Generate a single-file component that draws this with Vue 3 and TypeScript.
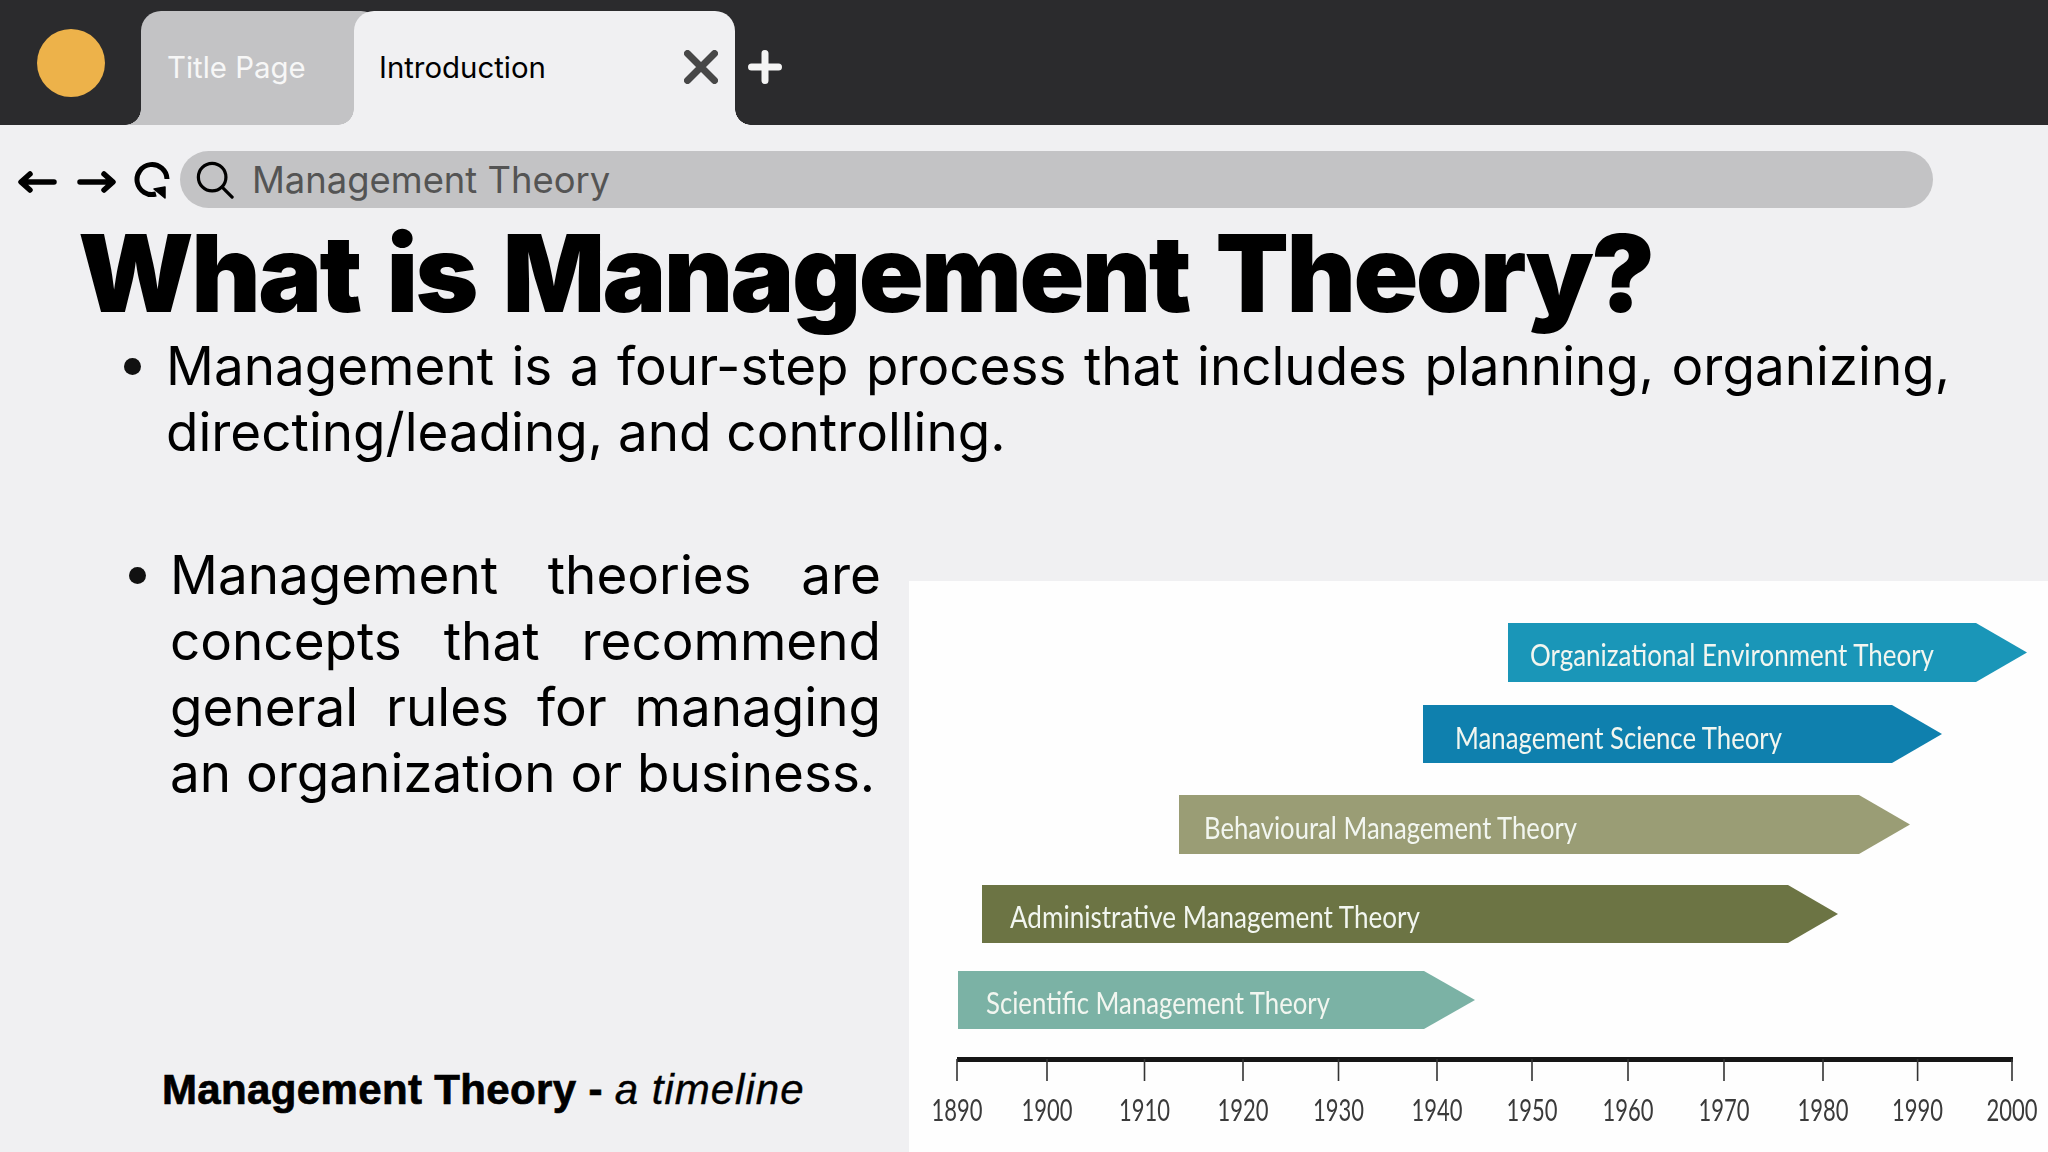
<script setup lang="ts">
interface Band { label: string; x: number; end: number; tip: number; top: number; bottom: number; textX: number; textEnd: number; textY: number; fill: string }
const bands: Band[] = [
  { label: 'Organizational Environment Theory', x: 599, end: 1067, tip: 1118, top: 42, bottom: 101, textX: 621, textEnd: 1025, textY: 85, fill: '#1a96b8' },
  { label: 'Management Science Theory', x: 514, end: 983, tip: 1033, top: 124, bottom: 182, textX: 546, textEnd: 873, textY: 168, fill: '#0f80ae' },
  { label: 'Behavioural Management Theory', x: 270, end: 950, tip: 1001, top: 214, bottom: 273, textX: 295, textEnd: 668, textY: 258, fill: '#9a9d75' },
  { label: 'Administrative Management Theory', x: 73, end: 879, tip: 929, top: 304, bottom: 362, textX: 101, textEnd: 511, textY: 347, fill: '#6c7444' },
  { label: 'Scientific Management Theory', x: 49, end: 515, tip: 566, top: 390, bottom: 448, textX: 77, textEnd: 421, textY: 433, fill: '#7bb2a5' },
]
const ticks = [48, 138, 235.5, 334, 429.5, 528, 623, 719, 815, 914, 1008.6, 1103]
const years = [1890, 1900, 1910, 1920, 1930, 1940, 1950, 1960, 1970, 1980, 1990, 2000]
</script>

<template>
  <div class="page">
    <header class="tabbar">
      <span class="logo"></span>
      <div class="tab inactive"><span>Title Page</span></div>
      <div class="tab active">
        <span>Introduction</span>
        <svg class="close" viewBox="0 0 34 34" aria-hidden="true"><path d="M3.5 3.5 30.5 30.5M30.5 3.5 3.5 30.5" /></svg>
      </div>
      <svg class="plus" viewBox="0 0 34 34" aria-hidden="true"><path d="M17 3.5V30.5M3.5 17H30.5" /></svg>
    </header>

    <nav class="toolbar">
      <svg class="arrow" viewBox="0 0 40 24" aria-hidden="true"><path d="M37 12H5M13 4 4 12l9 8" /></svg>
      <svg class="arrow next" viewBox="0 0 40 24" aria-hidden="true"><path d="M3 12H35M27 4l9 8-9 8" /></svg>
      <svg class="reload" viewBox="0 0 36 38" aria-hidden="true">
        <path class="ring" d="M33 17A15 15 0 1 0 22 32" />
        <path class="head" d="M20 27 31 25V36Z" />
      </svg>
      <div class="address">
        <svg class="search" viewBox="0 0 40 40" aria-hidden="true"><circle cx="17" cy="17" r="14.5" /><path d="M27.5 27.5 38 38" /></svg>
        <span>Management Theory</span>
      </div>
    </nav>

    <h1>What is Management Theory?</h1>
    <ul class="first">
      <li>Management is a four-step process that includes planning, organizing, directing/leading, and controlling.</li>
    </ul>

    <section class="lower">
      <div class="left">
        <ul class="second">
          <li>Management theories are concepts that recommend general rules for managing an organization or business.</li>
        </ul>
        <p class="caption"><b>Management Theory - </b><i>a timeline</i></p>
      </div>
      <figure class="chart">
        <svg viewBox="0 0 1139 571" width="1139" height="571">
          <g v-for="b in bands" :key="b.label">
            <polygon :points="`${b.x},${b.top} ${b.end},${b.top} ${b.tip},${(b.top + b.bottom) / 2} ${b.end},${b.bottom} ${b.x},${b.bottom}`" :fill="b.fill" />
            <text class="band-label" :x="b.textX" :y="b.textY" :textLength="b.textEnd - b.textX" lengthAdjust="spacingAndGlyphs">{{ b.label }}</text>
          </g>
          <rect x="48" y="476" width="1056" height="5" fill="#161616" />
          <g v-for="(t, i) in ticks" :key="t">
            <line :x1="t" :x2="t" y1="478" y2="500" stroke="#333" stroke-width="1.6" />
            <text class="year" :x="t" y="540" text-anchor="middle" textLength="51" lengthAdjust="spacingAndGlyphs">{{ years[i] }}</text>
          </g>
        </svg>
      </figure>
    </section>
  </div>
</template>

<style>
html, body { margin: 0; background: #f0f0f2; }
</style>

<style scoped>
.page {
  width: 2048px;
  height: 1152px;
  overflow: hidden;
  display: flex;
  flex-direction: column;
  background: #f0f0f2;
  color: #000;
  font-family: Inter, "Liberation Sans", sans-serif;
}
.tabbar {
  flex: none;
  height: 125px;
  box-sizing: border-box;
  padding: 11px 0 0 37px;
  display: flex;
  align-items: flex-start;
  background: #2b2b2d;
}
.logo {
  flex: none;
  width: 68px;
  height: 68px;
  margin: 18px 36px 0 0;
  border-radius: 50%;
  background: #edb24a;
}
.tab {
  position: relative;
  flex: none;
  box-sizing: border-box;
  height: 114px;
  display: flex;
  align-items: flex-start;
  font-size: 29.4px;
  line-height: 36px;
  padding-top: 39px;
  border-radius: 20px 20px 0 0;
}
.tab::before,
.tab.active::after {
  content: "";
  position: absolute;
  bottom: 0;
  width: 16px;
  height: 16px;
}
.tab.inactive {
  width: 240px;
  margin-right: -27px;
  padding-left: 26px;
  background: #c3c3c5;
  color: #f7f7f7;
}
.tab.inactive::before {
  left: -16px;
  background: radial-gradient(circle at 0 0, transparent 15.5px, #c3c3c5 16px);
}
.tab.active {
  width: 381px;
  padding-left: 25px;
  background: #f0f0f2;
  color: #000;
}
.tab.active::before {
  left: -16px;
  background: radial-gradient(circle at 0 0, transparent 15.5px, #f0f0f2 16px);
}
.tab.active::after {
  right: -16px;
  background: radial-gradient(circle at 100% 0, transparent 15.5px, #f0f0f2 16px);
}
.close {
  position: absolute;
  left: 330px;
  top: 39px;
  width: 34px;
  height: 34px;
  fill: none;
  stroke: #474747;
  stroke-width: 7;
  stroke-linecap: round;
}
.plus {
  flex: none;
  width: 34px;
  height: 34px;
  margin: 39px 0 0 13px;
  fill: none;
  stroke: #f4f4f4;
  stroke-width: 7;
  stroke-linecap: round;
}
.toolbar {
  flex: none;
  height: 57px;
  margin-top: 26px;
  padding-left: 17px;
  display: flex;
  align-items: center;
}
.arrow {
  flex: none;
  width: 40px;
  height: 24px;
  margin-top: 5px;
  fill: none;
  stroke: #000;
  stroke-width: 5.5;
  stroke-linecap: round;
  stroke-linejoin: round;
}
.arrow.next { margin-left: 20px; }
.reload {
  flex: none;
  width: 36px;
  height: 38px;
  margin: 3px 0 0 17px;
  fill: none;
}
.ring { stroke: #000; stroke-width: 5; }
.head { fill: #000; stroke: #000; stroke-width: 1.5; stroke-linejoin: round; }
.address {
  flex: none;
  box-sizing: border-box;
  width: 1753px;
  height: 57px;
  margin-left: 10px;
  padding-left: 16px;
  display: flex;
  align-items: center;
  gap: 18px;
  border-radius: 29px;
  background: #c3c3c5;
  color: #545454;
  font-size: 36.4px;
}
.search {
  flex: none;
  width: 38px;
  height: 38px;
  fill: none;
  stroke: #000;
  stroke-width: 3.4;
  stroke-linecap: round;
}
h1 {
  margin: 6px 0 0 78px;
  font-size: 107px;
  line-height: 118px;
  font-weight: 900;
  letter-spacing: -2.55px;
  word-spacing: 8px;
  white-space: nowrap;
}
ul {
  margin: 0;
  padding: 0;
  list-style: none;
  font-size: 53px;
  line-height: 66.3px;
  text-align: justify;
}
li { position: relative; }
li::before {
  content: "";
  position: absolute;
  top: 25px;
  width: 17px;
  height: 17px;
  border-radius: 50%;
  background: #111;
}
.first {
  width: 1784px;
  margin: 1px 0 0 166px;
}
.first li::before { left: -42px; }
.lower {
  flex: 1;
  min-height: 0;
  margin-top: 76px;
  display: flex;
}
.left {
  flex: none;
  width: 909px;
  display: flex;
  flex-direction: column;
}
.second {
  width: 711px;
  margin-left: 170px;
}
.second li::before { left: -41px; }
.caption {
  margin: auto 0 37px 162px;
  font-family: "Liberation Sans", Arial, sans-serif;
  font-size: 42px;
  line-height: 50px;
  white-space: nowrap;
}
.caption b {
  font-weight: 700;
  letter-spacing: 0.35px;
  -webkit-text-stroke: 0.7px #000;
}
.caption i {
  font-weight: 400;
  letter-spacing: 1px;
  -webkit-text-stroke: 0.4px #000;
}
.chart {
  flex: 1;
  align-self: flex-end;
  height: 571px;
  margin: 0;
  background: #fefefe;
}
.chart svg {
  display: block;
  filter: blur(0.6px);
}
.band-label {
  font-family: Lato, "Open Sans", sans-serif;
  font-size: 30px;
  fill: #f2f6f0;
}
.year {
  font-family: Lato, "Open Sans", sans-serif;
  font-size: 30px;
  fill: #3a3a3a;
}
</style>
